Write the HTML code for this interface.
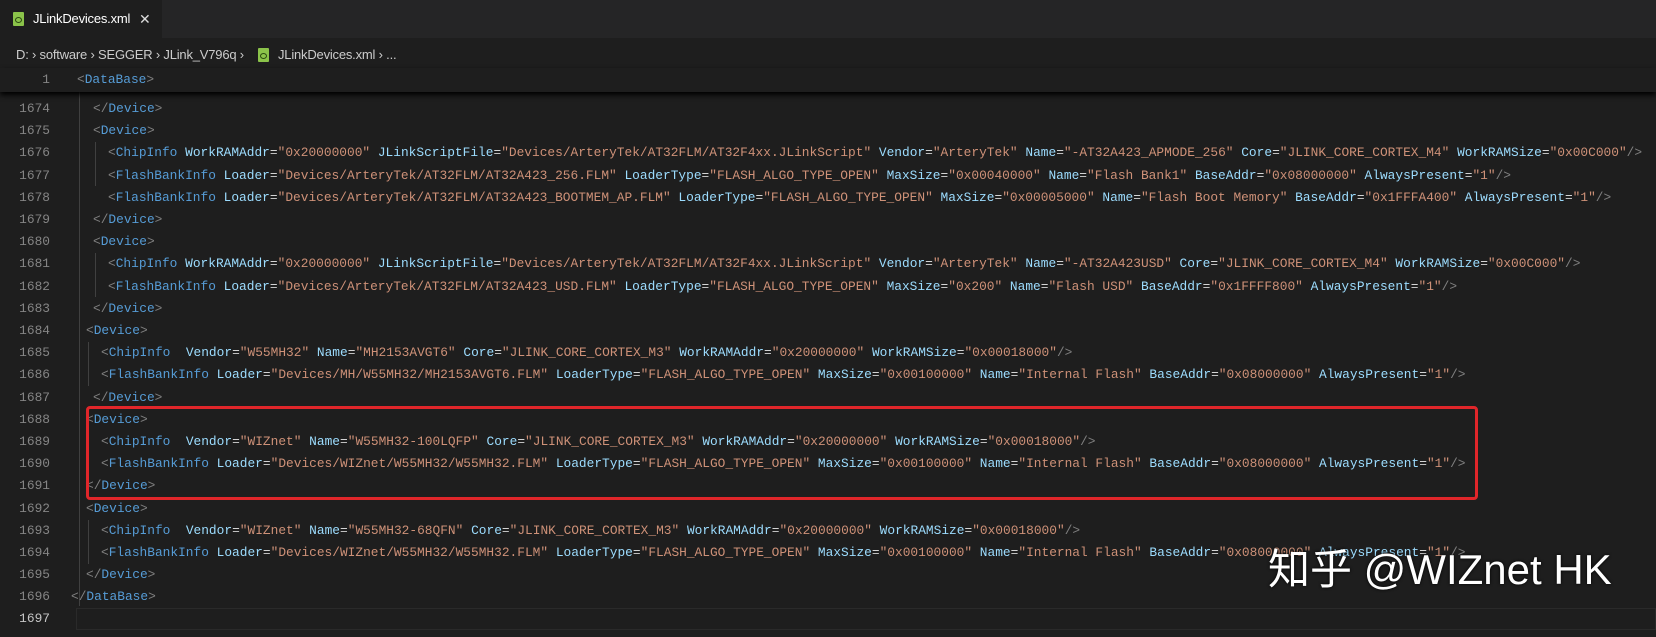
<!DOCTYPE html>
<html><head><meta charset="utf-8"><style>
*{margin:0;padding:0;box-sizing:border-box}
body{width:1656px;height:637px;background:#1e1e1e;position:relative;overflow:hidden;font-family:"Liberation Sans",sans-serif}
.tabbar{position:absolute;left:0;top:0;width:1656px;height:38px;background:#252526}
.tab{position:absolute;left:0;top:0;width:162px;height:38px;background:#1e1e1e;color:#fff;font-size:13px;line-height:38px;padding-left:33px;letter-spacing:-0.2px}
.tab .x{position:absolute;left:139px;top:0;color:#ddd;font-size:14px}
.ico{display:inline-block;position:absolute;width:11px;height:14px;background:#8bc34a;border-radius:1px}
.ico i{position:absolute;left:2px;top:5px;width:7px;height:6px;border:1.5px solid #2a4a10;border-radius:50%}
.bc{position:absolute;top:45px;color:#ccc;font-size:13px;line-height:20px;white-space:pre;letter-spacing:-0.2px}
.code{position:absolute;left:0;top:0;font-family:"Liberation Mono",monospace;font-size:12.85px}
.ln{position:absolute;left:0;width:50px;text-align:right;color:#858585;height:22px;line-height:22px}
.l{position:absolute;height:22px;line-height:22px;white-space:pre;color:#d4d4d4}
.p{color:#808080}.t{color:#569cd6}.a{color:#9cdcfe}.s{color:#ce9178}
.sticky{position:absolute;left:0;top:68px;width:1656px;height:24px;background:#1e1e1e;box-shadow:0 3px 5px #000}
.guide{position:absolute;width:1px;background:#404040}
.cur{position:absolute;left:76px;top:608px;width:1580px;height:22px;border:1px solid #2a2a2a}
.box{position:absolute;left:86px;top:406px;width:1392px;height:94px;border:3px solid #e0262a;border-radius:4px}
.wm{position:absolute;left:1268px;top:536px;color:#fff;font-size:42px;font-family:"Liberation Sans","Noto Sans CJK SC",sans-serif;text-shadow:0 0 3px #000;white-space:nowrap}
</style></head><body>
<div class="tabbar"><div class="tab"><span class="ico" style="left:13px;top:12px"><i></i></span>JLinkDevices.xml<span class="x">✕</span></div></div>
<div class="bc" style="left:16px">D: › software › SEGGER › JLink_V796q ›</div>
<div class="bc" style="left:278px">JLinkDevices.xml › ...</div>
<span class="ico" style="left:258px;top:48px"><i></i></span>
<div class="guide" style="left:79px;top:92px;height:514px"></div>
<div class="guide" style="left:95px;top:142px;height:44px"></div>
<div class="guide" style="left:95px;top:253px;height:44px"></div>
<div class="guide" style="left:88px;top:342px;height:44px"></div>
<div class="guide" style="left:88px;top:520px;height:44px"></div>
<div class="cur"></div>
<div class="code" id="c">
<div class="ln" style="top:98px">1674</div><div class="l" style="top:98px;left:93px">&lt;/Device&gt;</div>
<div class="ln" style="top:120px">1675</div><div class="l" style="top:120px;left:93px">&lt;Device&gt;</div>
<div class="ln" style="top:142px">1676</div><div class="l" style="top:142px;left:108px">&lt;ChipInfo WorkRAMAddr="0x20000000" JLinkScriptFile="Devices/ArteryTek/AT32FLM/AT32F4xx.JLinkScript" Vendor="ArteryTek" Name="-AT32A423_APMODE_256" Core="JLINK_CORE_CORTEX_M4" WorkRAMSize="0x00C000"/&gt;</div>
<div class="ln" style="top:165px">1677</div><div class="l" style="top:165px;left:108px">&lt;FlashBankInfo Loader="Devices/ArteryTek/AT32FLM/AT32A423_256.FLM" LoaderType="FLASH_ALGO_TYPE_OPEN" MaxSize="0x00040000" Name="Flash Bank1" BaseAddr="0x08000000" AlwaysPresent="1"/&gt;</div>
<div class="ln" style="top:187px">1678</div><div class="l" style="top:187px;left:108px">&lt;FlashBankInfo Loader="Devices/ArteryTek/AT32FLM/AT32A423_BOOTMEM_AP.FLM" LoaderType="FLASH_ALGO_TYPE_OPEN" MaxSize="0x00005000" Name="Flash Boot Memory" BaseAddr="0x1FFFA400" AlwaysPresent="1"/&gt;</div>
<div class="ln" style="top:209px">1679</div><div class="l" style="top:209px;left:93px">&lt;/Device&gt;</div>
<div class="ln" style="top:231px">1680</div><div class="l" style="top:231px;left:93px">&lt;Device&gt;</div>
<div class="ln" style="top:253px">1681</div><div class="l" style="top:253px;left:108px">&lt;ChipInfo WorkRAMAddr="0x20000000" JLinkScriptFile="Devices/ArteryTek/AT32FLM/AT32F4xx.JLinkScript" Vendor="ArteryTek" Name="-AT32A423USD" Core="JLINK_CORE_CORTEX_M4" WorkRAMSize="0x00C000"/&gt;</div>
<div class="ln" style="top:276px">1682</div><div class="l" style="top:276px;left:108px">&lt;FlashBankInfo Loader="Devices/ArteryTek/AT32FLM/AT32A423_USD.FLM" LoaderType="FLASH_ALGO_TYPE_OPEN" MaxSize="0x200" Name="Flash USD" BaseAddr="0x1FFFF800" AlwaysPresent="1"/&gt;</div>
<div class="ln" style="top:298px">1683</div><div class="l" style="top:298px;left:93px">&lt;/Device&gt;</div>
<div class="ln" style="top:320px">1684</div><div class="l" style="top:320px;left:86px">&lt;Device&gt;</div>
<div class="ln" style="top:342px">1685</div><div class="l" style="top:342px;left:101px">&lt;ChipInfo  Vendor="W55MH32" Name="MH2153AVGT6" Core="JLINK_CORE_CORTEX_M3" WorkRAMAddr="0x20000000" WorkRAMSize="0x00018000"/&gt;</div>
<div class="ln" style="top:364px">1686</div><div class="l" style="top:364px;left:101px">&lt;FlashBankInfo Loader="Devices/MH/W55MH32/MH2153AVGT6.FLM" LoaderType="FLASH_ALGO_TYPE_OPEN" MaxSize="0x00100000" Name="Internal Flash" BaseAddr="0x08000000" AlwaysPresent="1"/&gt;</div>
<div class="ln" style="top:387px">1687</div><div class="l" style="top:387px;left:93px">&lt;/Device&gt;</div>
<div class="ln" style="top:409px">1688</div><div class="l" style="top:409px;left:86px">&lt;Device&gt;</div>
<div class="ln" style="top:431px">1689</div><div class="l" style="top:431px;left:101px">&lt;ChipInfo  Vendor="WIZnet" Name="W55MH32-100LQFP" Core="JLINK_CORE_CORTEX_M3" WorkRAMAddr="0x20000000" WorkRAMSize="0x00018000"/&gt;</div>
<div class="ln" style="top:453px">1690</div><div class="l" style="top:453px;left:101px">&lt;FlashBankInfo Loader="Devices/WIZnet/W55MH32/W55MH32.FLM" LoaderType="FLASH_ALGO_TYPE_OPEN" MaxSize="0x00100000" Name="Internal Flash" BaseAddr="0x08000000" AlwaysPresent="1"/&gt;</div>
<div class="ln" style="top:475px">1691</div><div class="l" style="top:475px;left:86px">&lt;/Device&gt;</div>
<div class="ln" style="top:498px">1692</div><div class="l" style="top:498px;left:86px">&lt;Device&gt;</div>
<div class="ln" style="top:520px">1693</div><div class="l" style="top:520px;left:101px">&lt;ChipInfo  Vendor="WIZnet" Name="W55MH32-68QFN" Core="JLINK_CORE_CORTEX_M3" WorkRAMAddr="0x20000000" WorkRAMSize="0x00018000"/&gt;</div>
<div class="ln" style="top:542px">1694</div><div class="l" style="top:542px;left:101px">&lt;FlashBankInfo Loader="Devices/WIZnet/W55MH32/W55MH32.FLM" LoaderType="FLASH_ALGO_TYPE_OPEN" MaxSize="0x00100000" Name="Internal Flash" BaseAddr="0x08000000" AlwaysPresent="1"/&gt;</div>
<div class="ln" style="top:564px">1695</div><div class="l" style="top:564px;left:86px">&lt;/Device&gt;</div>
<div class="ln" style="top:586px">1696</div><div class="l" style="top:586px;left:71px">&lt;/DataBase&gt;</div>
<div class="ln" style="top:608px;color:#c6c6c6">1697</div>
</div>
<div class="sticky"><div class="code"><div class="ln" style="top:1px">1</div><div class="l" style="top:1px;left:77px">&lt;DataBase&gt;</div></div></div>
<div class="box"></div>
<div class="wm">知乎 @WIZnet HK</div>
<script>
document.querySelectorAll('.l').forEach(function(e){
 var s=e.textContent,h='';
 var re=/(<\/?)([\w]+)|([\w]+)(=)("[^"]*")|(\/?>)/g,last=0,m;
 function esc(x){return x.replace(/&/g,'&amp;').replace(/</g,'&lt;').replace(/>/g,'&gt;')}
 while((m=re.exec(s))){h+=esc(s.slice(last,m.index));
  if(m[1])h+='<span class="p">'+esc(m[1])+'</span><span class="t">'+m[2]+'</span>';
  else if(m[3])h+='<span class="a">'+m[3]+'</span>=<span class="s">'+esc(m[5])+'</span>';
  else h+='<span class="p">'+esc(m[6])+'</span>';
  last=re.lastIndex;}
 h+=esc(s.slice(last));e.innerHTML=h;});
</script>
</body></html>
